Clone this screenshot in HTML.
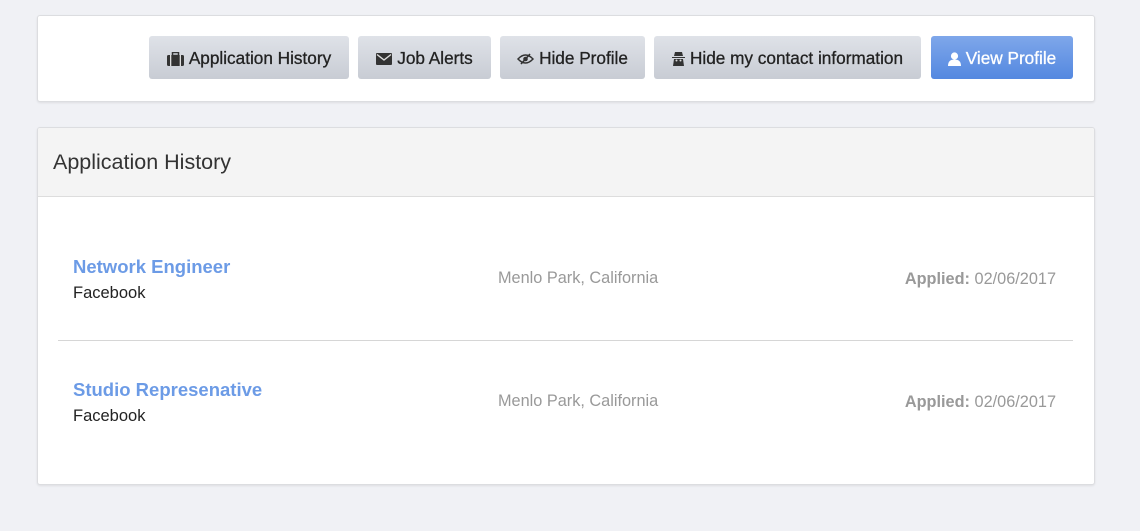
<!DOCTYPE html>
<html><head><style>
body{margin:0;width:1140px;height:531px;background:#f0f1f5;font-family:"Liberation Sans",sans-serif;position:relative;overflow:hidden}
.p{position:absolute;background:#fff;border:1px solid #dcdde0;border-radius:3px;box-shadow:0 1px 2px rgba(0,0,0,.08)}
.b{position:absolute;top:36px;height:43px;padding-top:2px;border-radius:3px;background:linear-gradient(#dfe2e8,#c8ccd4);color:#222;font-size:17.2px;display:flex;align-items:center;justify-content:center;gap:5px;box-sizing:border-box;-webkit-text-stroke:0.3px #222}
.b.blue{background:linear-gradient(#7fa7ea,#5488e0);color:#fff;-webkit-text-stroke:0.3px #fff}
.t{position:absolute;font-size:18.5px;font-weight:bold;color:#6c9be6}
.c{position:absolute;font-size:16.5px;color:#222}
.l{position:absolute;font-size:16.3px;color:#999}
.a{position:absolute;right:84px;font-size:16.3px;color:#999}
.a b{color:#999}
</style></head><body>
<div class="p" style="left:37px;top:15px;width:1056px;height:85px"></div>
<div class="b" style="left:149px;width:200px"><svg width="17" height="14" viewBox="0 0 17 14"><rect x="0" y="3" width="17" height="11" rx="1.5" fill="#333"/><rect x="5.5" y="0.5" width="6" height="3" fill="none" stroke="#333" stroke-width="1.5"/><rect x="3" y="3" width="1.3" height="11" fill="#ddd"/><rect x="12.7" y="3" width="1.3" height="11" fill="#ddd"/></svg>Application History</div>
<div class="b" style="left:358px;width:133px"><svg width="16" height="12" viewBox="0 0 16 12"><rect width="16" height="12" rx="1" fill="#333"/><path d="M1 1.5 L8 7 L15 1.5" stroke="#ddd" stroke-width="1.4" fill="none"/></svg>Job Alerts</div>
<div class="b" style="left:500px;width:145px"><svg width="17" height="12" viewBox="0 0 17 12"><path d="M1 6 Q8.5 -2 16 6 Q8.5 14 1 6Z" fill="none" stroke="#333" stroke-width="1.5"/><circle cx="8.5" cy="6" r="2.3" fill="#333"/><path d="M4 11 L13 1" stroke="#333" stroke-width="1.6"/></svg>Hide Profile</div>
<div class="b" style="left:654px;width:267px"><svg width="13" height="15" viewBox="0 0 13 15"><path d="M3 1 H10 L11 5 H2Z M0 6 H13 V7 H0Z M2 8 H11 L12 15 H1Z" fill="#333"/><circle cx="4.5" cy="9.5" r="1" fill="#ddd"/><circle cx="8.5" cy="9.5" r="1" fill="#ddd"/></svg>Hide my contact information</div>
<div class="b blue" style="left:931px;width:142px"><svg width="13" height="14" viewBox="0 0 13 14"><circle cx="6.5" cy="4" r="3.6" fill="#fff"/><path d="M0 14 Q0 7.5 6.5 7.5 Q13 7.5 13 14Z" fill="#fff"/></svg>View Profile</div>

<div class="p" style="left:37px;top:127px;width:1056px;height:356px;overflow:hidden">
<div style="height:68px;background:#f4f4f4;border-bottom:1px solid #ddd"></div>
</div>
<div style="position:absolute;left:53px;top:150px;font-size:21.5px;color:#333">Application History</div>
<div class="t" style="left:73px;top:256px">Network Engineer</div>
<div class="c" style="left:73px;top:284px">Facebook</div>
<div class="l" style="left:498px;top:269px">Menlo Park, California</div>
<div class="a" style="top:270px"><b>Applied:</b> 02/06/2017</div>
<div style="position:absolute;left:58px;top:340px;width:1015px;height:1px;background:#d6d6d6"></div>
<div class="t" style="left:73px;top:379px">Studio Represenative</div>
<div class="c" style="left:73px;top:407px">Facebook</div>
<div class="l" style="left:498px;top:392px">Menlo Park, California</div>
<div class="a" style="top:393px"><b>Applied:</b> 02/06/2017</div>
</body></html>
